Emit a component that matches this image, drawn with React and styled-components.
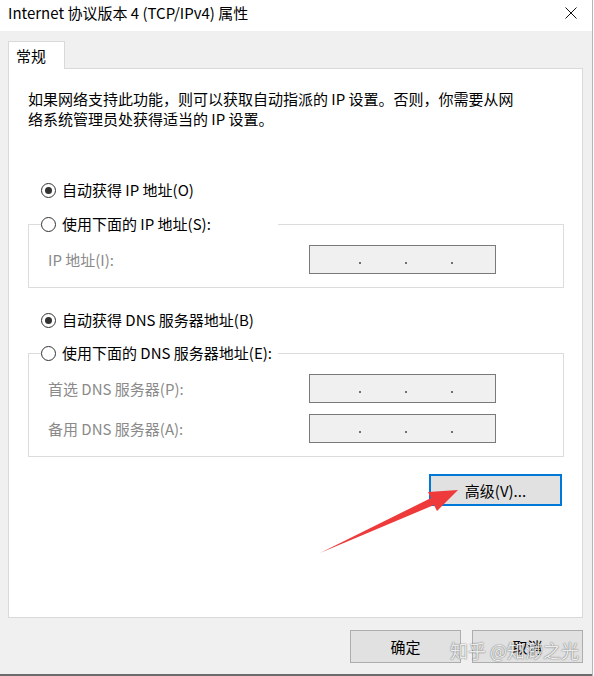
import React from "react";
import styled, { createGlobalStyle } from "styled-components";

const GlobalStyle = createGlobalStyle`
  body {
    margin: 0;
    background: #ffffff;
    font-family: "Noto Sans CJK SC", "Noto Sans", sans-serif;
    color: #000;
  }
`;

const Window = styled.div`
  position: relative;
  width: 592px;
  height: 676px;
  border-right: 1px solid #b5b5b5;
  display: flex;
  flex-direction: column;
  overflow: hidden;
`;

const TitleBar = styled.div`
  flex: none;
  height: 31px;
  box-sizing: border-box;
  padding: 0 15px 5px 8px;
  background: #fff;
  display: flex;
  align-items: center;
  justify-content: space-between;
  font-size: 15px;
  line-height: 20px;
`;

const Body = styled.div`
  flex: 1;
  display: flex;
  flex-direction: column;
  padding: 10px 9px 0 8px;
  background: #f0f0f0;
  border-bottom: 2px solid #6b6b6b;
`;

const Tab = styled.div`
  position: relative;
  z-index: 1;
  width: 57px;
  height: 28px;
  box-sizing: border-box;
  margin-bottom: -1px;
  padding-left: 7px;
  background: #fff;
  border: 1px solid #d9d9d9;
  border-bottom: none;
  font-size: 15px;
  line-height: 28px;
`;

const Panel = styled.div`
  height: 550px;
  box-sizing: border-box;
  padding: 20px 18px 0 19px;
  background: #fff;
  border: 1px solid #d9d9d9;
  display: flex;
  flex-direction: column;
`;

const Description = styled.p`
  margin: 0;
  font-size: 15px;
  line-height: 20px;
  white-space: nowrap;
`;

const RadioRow = styled.label`
  display: flex;
  align-items: center;
  gap: 6px;
  height: 20px;
  margin-top: ${(p) => p.$top || 0}px;
  padding-left: ${(p) => (p.$inLegend ? 0 : 13)}px;
  font-size: 15px;
  line-height: 20px;
  white-space: nowrap;
`;

const Radio = styled.span`
  flex: none;
  width: 15px;
  height: 15px;
  box-sizing: border-box;
  border-radius: 50%;
  border: 1px solid #333;
  display: flex;
  align-items: center;
  justify-content: center;

  &::after {
    content: "";
    width: 7px;
    height: 7px;
    border-radius: 50%;
    background: ${(p) => (p.$checked ? "#333" : "transparent")};
  }
`;

const GroupBox = styled.fieldset`
  margin: ${(p) => p.$top || 0}px 0 0;
  padding: 11px 0 13px 19px;
  min-width: 0;
  border: 1px solid #dcdcdc;
  display: flex;
  flex-direction: column;
  gap: 11px;
`;

const Legend = styled.legend`
  width: 237px;
  margin-left: -7px;
  padding: 0;
`;

const FieldRow = styled.div`
  display: grid;
  grid-template-columns: 261px 187px;
  align-items: center;
`;

const FieldLabel = styled.span`
  font-size: 15px;
  line-height: 20px;
  color: #8a8a8a;
`;

const AddressBox = styled.div`
  width: 187px;
  height: 29px;
  box-sizing: border-box;
  padding: 6px 0 0 7px;
  border: 1px solid #7a7a7a;
  background: #f0f0f0;
  display: flex;
  align-items: center;
  justify-content: center;
  gap: 44px;
`;

const Dot = styled.span`
  width: 2px;
  height: 2px;
  background: #707070;
`;

const AdvancedButton = styled.button`
  align-self: flex-end;
  width: 133px;
  height: 32px;
  margin: 17px 2px 0 0;
  padding: 0;
  border: 2px solid #0078d7;
  background: #e1e1e1;
  font-family: inherit;
  font-size: 15px;
  color: #000;
`;

const Footer = styled.div`
  display: flex;
  justify-content: flex-end;
  gap: 11px;
  padding-top: 12px;
`;

const DialogButton = styled.button`
  width: 111px;
  height: 33px;
  padding: 0;
  border: 1px solid #adadad;
  background: #e1e1e1;
  font-family: inherit;
  font-size: 15px;
  color: #000;
`;

const Overlay = styled.svg`
  position: absolute;
  left: 0;
  top: 0;
  pointer-events: none;
`;

const Watermark = styled.div`
  position: absolute;
  left: 450px;
  top: 638px;
  font-size: 18px;
  line-height: 24px;
  color: rgba(255, 255, 255, 0.88);
  text-shadow: 0 0 1px rgba(0, 0, 0, 0.55), 0 0 2px rgba(0, 0, 0, 0.25);
  white-space: nowrap;
  pointer-events: none;
`;

const Address = () => (
  <AddressBox>
    <Dot />
    <Dot />
    <Dot />
  </AddressBox>
);

const CloseIcon = () => (
  <svg width="12" height="12" viewBox="0 0 12 12">
    <path d="M0.5 0.5 L11.5 11.5 M11.5 0.5 L0.5 11.5" stroke="#111" strokeWidth="1" fill="none" />
  </svg>
);

const App = () => (
  <>
    <GlobalStyle />
    <Window>
      <TitleBar>
        <span>Internet 协议版本 4 (TCP/IPv4) 属性</span>
        <CloseIcon />
      </TitleBar>
      <Body>
        <Tab>常规</Tab>
        <Panel>
          <Description>
            如果网络支持此功能，则可以获取自动指派的 IP 设置。否则，你需要从网
            <br />
            络系统管理员处获得适当的 IP 设置。
          </Description>

          <RadioRow $top={51}>
            <Radio $checked />
            自动获得 IP 地址(O)
          </RadioRow>
          <GroupBox $top={14}>
            <Legend>
              <RadioRow $inLegend>
                <Radio />
                使用下面的 IP 地址(S):
              </RadioRow>
            </Legend>
            <FieldRow>
              <FieldLabel>IP 地址(I):</FieldLabel>
              <Address />
            </FieldRow>
          </GroupBox>

          <RadioRow $top={22}>
            <Radio $checked />
            自动获得 DNS 服务器地址(B)
          </RadioRow>
          <GroupBox $top={13}>
            <Legend>
              <RadioRow $inLegend>
                <Radio />
                使用下面的 DNS 服务器地址(E):
              </RadioRow>
            </Legend>
            <FieldRow>
              <FieldLabel>首选 DNS 服务器(P):</FieldLabel>
              <Address />
            </FieldRow>
            <FieldRow>
              <FieldLabel>备用 DNS 服务器(A):</FieldLabel>
              <Address />
            </FieldRow>
          </GroupBox>

          <AdvancedButton>高级(V)...</AdvancedButton>
        </Panel>
        <Footer>
          <DialogButton>确定</DialogButton>
          <DialogButton>取消</DialogButton>
        </Footer>
      </Body>

      <Overlay width="594" height="676" viewBox="0 0 594 676">
        <polygon
          points="320,553 431,498 428,492 458,490 437,511 434,505"
          fill="#ee3a3a"
        />
      </Overlay>
      <Watermark>知乎 @知渺之光</Watermark>
    </Window>
  </>
);

export default App;
